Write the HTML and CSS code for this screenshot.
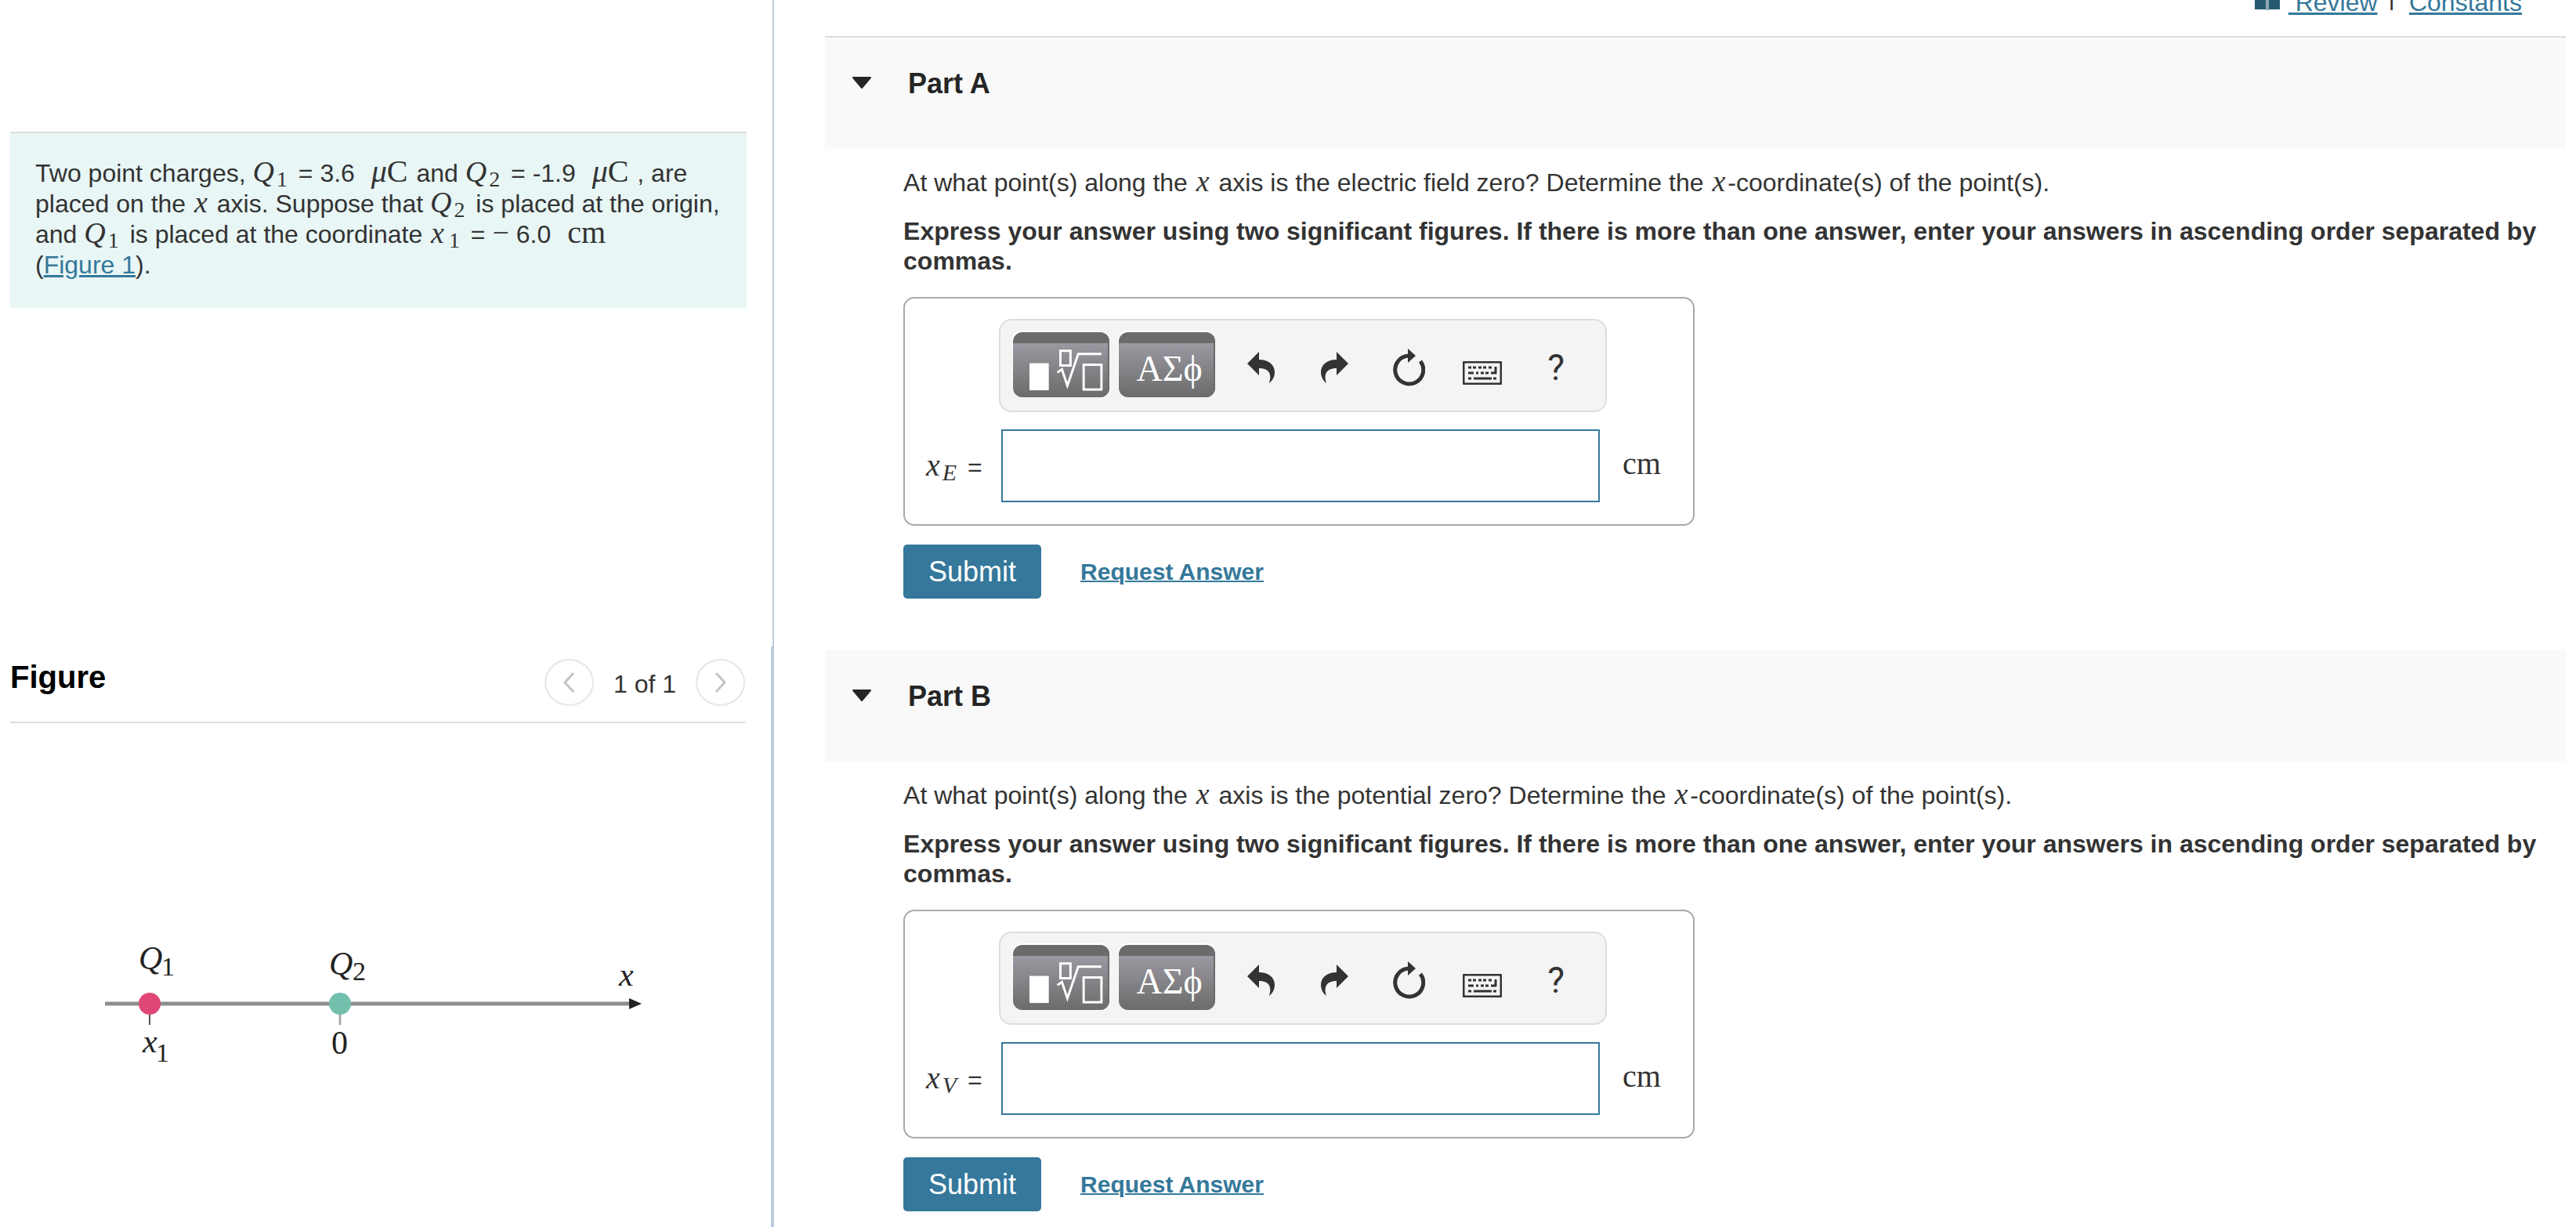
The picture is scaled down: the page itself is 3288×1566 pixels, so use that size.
FILE: index.html
```html
<!DOCTYPE html>
<html lang="en">
<head>
  <meta charset="UTF-8">
  <meta name="viewport" content="width=device-width, initial-scale=1.0">
  <title>Point charges</title>
  <link rel="stylesheet" href="styles.css">
</head>
<body>
<svg class="sprite" aria-hidden="true">
  <symbol id="i-template" viewBox="0 0 124 84">
    <rect x="21" y="40" width="25" height="35" fill="#fff"/>
    <g fill="none" stroke="#fff" stroke-width="3">
      <rect x="61" y="24" width="13" height="19"/>
      <rect x="91" y="42" width="23" height="32"/>
      <path d="M57 52l6-4 7 21 14-41h30"/>
    </g>
  </symbol>
  <symbol id="i-undo" viewBox="0 0 36 40">
    <path d="M0 15L15 0v10c13 0 20 7 20 16 0 6-3 11-7 14 3-9 2-19-13-19v9z" fill="#333"/>
  </symbol>
  <symbol id="i-redo" viewBox="0 0 36 40">
    <path d="M35 15L20 0v10C7 10 0 17 0 26c0 6 3 11 7 14-3-9-2-19 13-19v9z" fill="#333"/>
  </symbol>
  <symbol id="i-reset" viewBox="0 0 42 48">
    <path d="M21 9a18 18 0 1 0 15 7" fill="none" stroke="#333" stroke-width="5"/>
    <path d="M20 0l10 9-10 9z" fill="#333"/>
  </symbol>
  <symbol id="i-keyboard" viewBox="0 0 50 30">
    <rect x="1" y="1" width="48" height="28" rx="2" fill="none" stroke="#333" stroke-width="3"/>
    <g fill="none" stroke="#333" stroke-width="3">
      <path d="M7 8h4M13 8h4M20 8h4M26 8h4M33 8h4"/>
      <path d="M7 15h7M17 15h3M23 15h4M29 15h4M36 15h7"/>
      <path d="M7 22h4M14 22h23M39 22h4M42 7v9"/>
    </g>
  </symbol>
</svg>

<div class="page">
  <aside class="side">
    <section class="problem-pane">
      <div class="problem">
        Two point charges, <i class="m">Q</i><sub>1</sub> = 3.6 <span class="unit"><i>μ</i>C</span> and <i class="m">Q</i><sub>2</sub> = -1.9 <span class="unit"><i>μ</i>C</span> , are<br>
        placed on the <i class="m x">x</i> axis. Suppose that <i class="m">Q</i><sub>2</sub> is placed at the origin,<br>
        and <i class="m">Q</i><sub>1</sub> is placed at the coordinate <i class="m x">x</i><sub>1</sub> = <span class="m">−</span> 6.0 <span class="unit">cm</span><br>
        (<a href="#figure">Figure 1</a>).
      </div>
    </section>
    <section class="figure-pane" id="figure">
      <header class="figure-head">
        <h2>Figure</h2>
        <div class="pager">
          <button type="button" aria-label="Previous figure"><svg viewBox="0 0 16 28"><path d="M14 2L3 14l11 12"/></svg></button>
          <span>1 of 1</span>
          <button type="button" aria-label="Next figure"><svg viewBox="0 0 16 28"><path d="M2 2l11 12L2 26"/></svg></button>
        </div>
      </header>
      <svg class="diagram" viewBox="0 0 700 180">
        <path d="M4 81h676" stroke="#8e8f8f" stroke-width="5"/>
        <path d="M673 74l16 7-16 7z" fill="#222"/>
        <path d="M61 90v18" stroke="#555" stroke-width="2"/>
        <path d="M304 90v18" stroke="#aaa" stroke-width="3"/>
        <circle cx="61" cy="81" r="14" fill="#df4776"/>
        <circle cx="304" cy="81" r="14" fill="#72bfad"/>
        <text x="47" y="37" class="var">Q</text><text x="76" y="45" class="idx">1</text>
        <text x="290" y="44" class="var">Q</text><text x="320" y="51" class="idx">2</text>
        <text x="660" y="58" class="var">x</text>
        <text x="52" y="143" class="var">x</text><text x="69" y="155" class="idx">1</text>
        <text x="293" y="145" class="num">0</text>
      </svg>
    </section>
  </aside>

  <main class="main">
    <nav class="links">
      <svg class="book" viewBox="0 0 32 28"><path d="M0 0h14v27H0zM18 0h14v27H18z" fill="#255a70"/><path d="M14 0h4v28h-4z" fill="#8fa9b4"/></svg>
      <a href="#">&nbsp;Review</a>
      <span>|</span>
      <a href="#">Constants</a>
    </nav>

    <section class="part first">
      <header class="part-head">
        <svg class="caret" viewBox="0 0 26 16"><path d="M2 1h22L13 14z"/></svg>
        <h2>Part A</h2>
      </header>
      <form class="part-body">
        <p>At what point(s) along the <i class="m x">x</i> axis is the electric field zero? Determine the <i class="m x">x</i>-coordinate(s) of the point(s).</p>
        <p class="hint">Express your answer using two significant figures. If there is more than one answer, enter your answers in ascending order separated by commas.</p>
        <div class="answer">
          <div class="toolbar">
            <button type="button" class="key" aria-label="Templates"><svg><use href="#i-template"/></svg></button>
            <button type="button" class="key greek">ΑΣϕ</button>
            <button type="button" class="tool undo" aria-label="Undo"><svg><use href="#i-undo"/></svg></button>
            <button type="button" class="tool redo" aria-label="Redo"><svg><use href="#i-redo"/></svg></button>
            <button type="button" class="tool reset" aria-label="Reset"><svg><use href="#i-reset"/></svg></button>
            <button type="button" class="tool keyboard" aria-label="Keyboard shortcuts"><svg><use href="#i-keyboard"/></svg></button>
            <button type="button" class="tool help">?</button>
          </div>
          <div class="entry">
            <label for="xe"><i>x</i><sub><i>E</i></sub> =</label>
            <input type="text" id="xe">
            <span class="cm">cm</span>
          </div>
        </div>
        <div class="actions">
          <button type="submit">Submit</button>
          <a href="#">Request Answer</a>
        </div>
      </form>
    </section>

    <section class="part last">
      <header class="part-head">
        <svg class="caret" viewBox="0 0 26 16"><path d="M2 1h22L13 14z"/></svg>
        <h2>Part B</h2>
      </header>
      <form class="part-body">
        <p>At what point(s) along the <i class="m x">x</i> axis is the potential zero? Determine the <i class="m x">x</i>-coordinate(s) of the point(s).</p>
        <p class="hint">Express your answer using two significant figures. If there is more than one answer, enter your answers in ascending order separated by commas.</p>
        <div class="answer">
          <div class="toolbar">
            <button type="button" class="key" aria-label="Templates"><svg><use href="#i-template"/></svg></button>
            <button type="button" class="key greek">ΑΣϕ</button>
            <button type="button" class="tool undo" aria-label="Undo"><svg><use href="#i-undo"/></svg></button>
            <button type="button" class="tool redo" aria-label="Redo"><svg><use href="#i-redo"/></svg></button>
            <button type="button" class="tool reset" aria-label="Reset"><svg><use href="#i-reset"/></svg></button>
            <button type="button" class="tool keyboard" aria-label="Keyboard shortcuts"><svg><use href="#i-keyboard"/></svg></button>
            <button type="button" class="tool help">?</button>
          </div>
          <div class="entry">
            <label for="xv"><i>x</i><sub><i>V</i></sub> =</label>
            <input type="text" id="xv">
            <span class="cm">cm</span>
          </div>
        </div>
        <div class="actions">
          <button type="submit">Submit</button>
          <a href="#">Request Answer</a>
        </div>
      </form>
    </section>
  </main>
</div>
</body>
</html>
```
FILE: styles.css
```css
* {
  box-sizing: border-box;
}
body {
  margin: 0;
  background: #fff;
  color: #333;
  font-family: "Liberation Sans", Arial, sans-serif;
  font-size: 32px;
  line-height: 38px;
}
h2, p {
  margin: 0;
}
a {
  color: #35789b;
  text-decoration-thickness: 3px;
}
button {
  font-family: inherit;
  padding: 0;
  border: none;
  background: none;
  cursor: pointer;
}
svg {
  display: block;
}
.sprite {
  width: 0;
  height: 0;
  position: absolute;
}
.page {
  display: grid;
  grid-template-columns: 30.05% 1fr;
  min-height: 100vh;
}

/* left column */
.side {
  display: grid;
  grid-template-rows: 825fr 741fr;
}
.problem-pane {
  padding: 168px 33px 0 13px;
  border-right: 2px solid #bccbdb;
}
.problem {
  background: #e8f6f5;
  border-top: 2px solid #ddd;
  padding: 32px 32px 35px;
  line-height: 39px;
}
.m, .unit, .problem sub, .entry label i, .cm {
  font-family: "Liberation Serif", "Times New Roman", serif;
}
.m {
  font-size: 38px;
  line-height: 1px;
}
.x {
  margin: 0 3px 0 2px;
}
.unit {
  font-size: 40px;
  line-height: 1px;
  margin: 0 2px 0 12px;
}
sub {
  font-size: 28px;
  line-height: 1px;
  vertical-align: -6px;
  margin: 0 5px 0 3px;
}
.figure-pane {
  padding: 16px 33px 0 13px;
  border-right: 4px solid #bccbdb;
}
.figure-head {
  display: flex;
  justify-content: space-between;
  align-items: center;
  height: 82px;
  padding-bottom: 20px;
  border-bottom: 2px solid #ddd;
}
.figure-head h2 {
  font-size: 40px;
  color: #000;
  padding-bottom: 14px;
}
.pager {
  display: flex;
  align-items: center;
  gap: 25px;
}
.pager span {
  padding-top: 4px;
}
.pager button {
  display: grid;
  place-items: center;
  width: 63px;
  height: 60px;
  border: 2px solid #e6e6e6;
  border-radius: 50%;
}
.pager svg {
  width: 16px;
  height: 28px;
  fill: none;
  stroke: #c4c4c4;
  stroke-width: 3;
}
.diagram {
  width: 700px;
  margin: 277px 0 0 117px;
  font-family: "Liberation Serif", "Times New Roman", serif;
  fill: #222;
}
.var {
  font-size: 42px;
  font-style: italic;
}
.idx {
  font-size: 34px;
}
.num {
  font-size: 42px;
}

/* right column */
.main {
  padding: 0 13px 0 65px;
}
.links {
  display: flex;
  justify-content: flex-end;
  align-items: flex-end;
  height: 46px;
  padding: 0 56px 24px 0;
}
.links a {
  margin-left: 11px;
}
.links span {
  padding: 0 7px 8px 14px;
}
.book {
  width: 32px;
  height: 28px;
  margin-bottom: 9px;
}
.first .part-head {
  border-top: 2px solid #ddd;
  height: 144px;
}
.part-head {
  display: flex;
  align-items: flex-start;
  gap: 46px;
  height: 142px;
  padding: 39px 34px;
  background: #f9f9f9;
  color: #252525;
}
.part-head h2 {
  font-size: 36px;
  line-height: 40px;
}
.caret {
  width: 26px;
  height: 16px;
  margin-top: 11px;
  fill: #252525;
  stroke: #252525;
  stroke-width: 2;
  stroke-linejoin: round;
}
.part-body {
  padding: 24px 0 66px 100px;
}
.last .part-body {
  padding-bottom: 16px;
}
.hint {
  font-weight: bold;
  margin-top: 24px;
}
.answer {
  width: 1010px;
  max-width: 100%;
  margin-top: 27px;
  padding: 26px 0 28px;
  border: 2px solid #a9a9a9;
  border-radius: 14px;
}
.toolbar {
  display: flex;
  align-items: center;
  width: 776px;
  height: 119px;
  margin-left: 120px;
  padding: 0 0 2px 16px;
  background: #f4f4f4;
  border: 2px solid #ddd;
  border-radius: 16px;
}
.key {
  width: 123px;
  height: 83px;
  margin-right: 12px;
  border-radius: 12px;
  background: linear-gradient(#6b6b6b 14px, #9b99a1 14px, #6b6b6b);
  box-shadow: -1px -2px 0 #fff, inset -2px 0 0 #6b6b6b;
}
.key svg {
  width: 123px;
  height: 83px;
}
.greek {
  color: #fff;
  font: 46px "Liberation Serif", "Times New Roman", serif;
  padding: 10px 0 0 6px;
}
.tool {
  display: grid;
  justify-items: center;
  width: 94px;
  padding-top: 6px;
}
.undo svg, .redo svg {
  width: 36px;
  height: 40px;
}
.reset svg {
  width: 42px;
  height: 48px;
}
.keyboard svg {
  width: 50px;
  height: 30px;
  margin-top: 14px;
}
.help {
  font: 46px Roboto, sans-serif;
  color: #333;
}
.entry {
  display: flex;
  align-items: center;
  margin-top: 22px;
  padding-left: 27px;
}
.entry label {
  width: 96px;
  white-space: nowrap;
}
.entry label i {
  font-size: 40px;
}
.entry sub i {
  font-size: 30px;
}
.entry input {
  width: 764px;
  height: 93px;
  padding: 0 16px;
  border: 2px solid #35789b;
  font: inherit;
}
.cm {
  margin-left: 29px;
  padding-bottom: 6px;
  font-size: 40px;
}
.actions {
  display: flex;
  align-items: center;
  gap: 50px;
  margin-top: 24px;
}
.actions button {
  width: 176px;
  height: 69px;
  border-radius: 5px;
  background: #35789b;
  color: #fff;
  font-size: 36px;
}
.actions a {
  font-size: 30px;
  font-weight: bold;
  text-decoration-thickness: 2px;
}
```
